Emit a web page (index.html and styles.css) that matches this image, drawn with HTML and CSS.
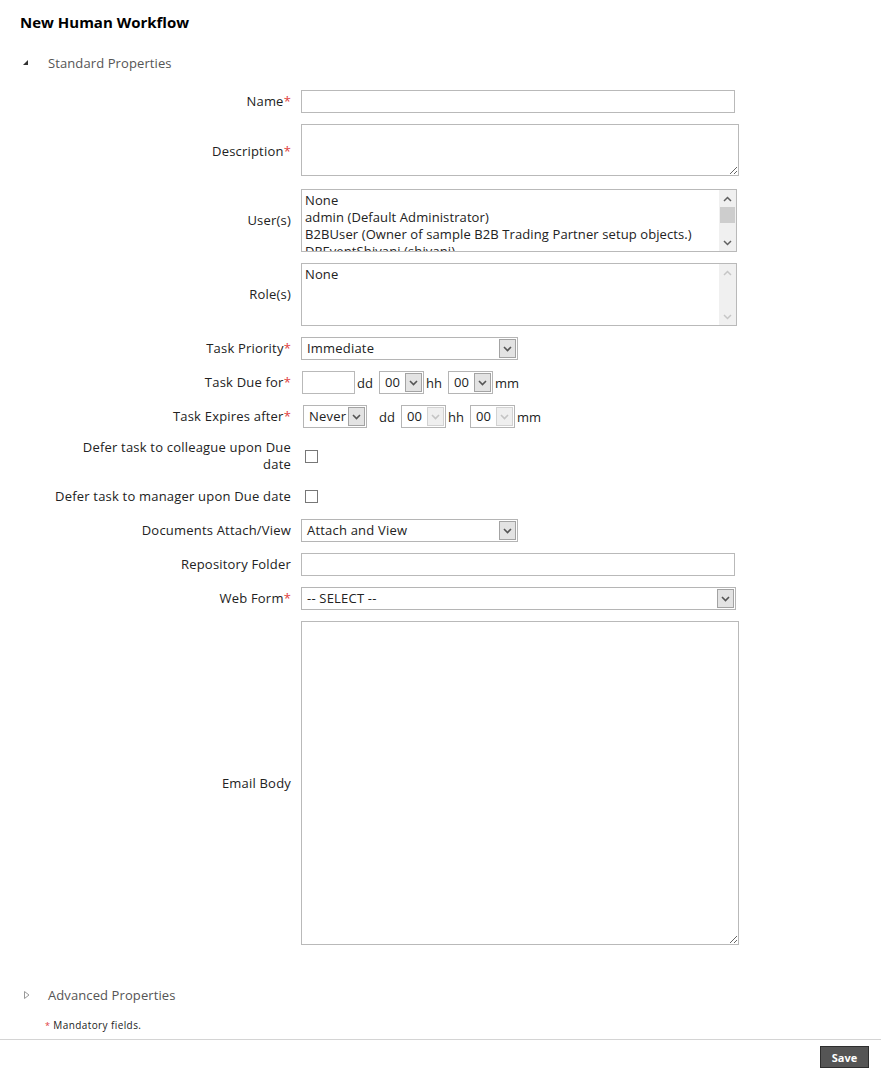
FILE: index.html
```html
<!DOCTYPE html>
<html lang="en">
<head>
    <meta charset="UTF-8">
    <title>New Human Workflow</title>
    <link rel="stylesheet" href="styles.css">
</head>
<body>
    <h1 class="title">New Human Workflow</h1>

    <div class="section-head">
        <svg class="tri" width="8" height="8" viewBox="0 0 8 8"><path d="M6 1 L6 6 L1 6 Z" fill="#333"/></svg>
        <span>Standard Properties</span>
    </div>

    <div class="form">
        <label class="lbl">Name<span class="req">*</span></label>
        <div class="field"><input type="text" class="text wide"></div>

        <label class="lbl">Description<span class="req">*</span></label>
        <div class="field"><textarea class="area desc"></textarea></div>

        <label class="lbl">User(s)</label>
        <div class="field">
            <div class="listbox">
                <div class="options">
                    <div>None</div>
                    <div>admin (Default Administrator)</div>
                    <div>B2BUser (Owner of sample B2B Trading Partner setup objects.)</div>
                    <div>DPEventShivani (shivani)</div>
                </div>
                <div class="scrollbar">
                    <span class="sb-arrow"><svg width="9" height="6" viewBox="0 0 9 6"><path d="M1 5 L4.5 1.5 L8 5" stroke="#606060" stroke-width="1.5" fill="none"/></svg></span>
                    <span class="sb-thumb"></span>
                    <span class="sb-space"></span>
                    <span class="sb-arrow"><svg width="9" height="6" viewBox="0 0 9 6"><path d="M1 1 L4.5 4.5 L8 1" stroke="#606060" stroke-width="1.5" fill="none"/></svg></span>
                </div>
            </div>
        </div>

        <label class="lbl">Role(s)</label>
        <div class="field">
            <div class="listbox">
                <div class="options">
                    <div>None</div>
                </div>
                <div class="scrollbar">
                    <span class="sb-arrow"><svg width="9" height="6" viewBox="0 0 9 6"><path d="M1 5 L4.5 1.5 L8 5" stroke="#c6c6c6" stroke-width="1.5" fill="none"/></svg></span>
                    <span class="sb-space"></span>
                    <span class="sb-arrow"><svg width="9" height="6" viewBox="0 0 9 6"><path d="M1 1 L4.5 4.5 L8 1" stroke="#c6c6c6" stroke-width="1.5" fill="none"/></svg></span>
                </div>
            </div>
        </div>

        <label class="lbl">Task Priority<span class="req">*</span></label>
        <div class="field">
            <div class="select priority"><span class="val">Immediate</span><span class="arrow"><svg width="9" height="6" viewBox="0 0 9 6"><path d="M1 1 L4.5 4.5 L8 1" stroke="#555" stroke-width="1.6" fill="none"/></svg></span></div>
        </div>

        <label class="lbl">Task Due for<span class="req">*</span></label>
        <div class="field inline">
            <input type="text" class="text days">
            <span class="unit">dd</span>
            <div class="select small"><span class="val">00</span><span class="arrow"><svg width="9" height="6" viewBox="0 0 9 6"><path d="M1 1 L4.5 4.5 L8 1" stroke="#555" stroke-width="1.6" fill="none"/></svg></span></div>
            <span class="unit">hh</span>
            <div class="select small"><span class="val">00</span><span class="arrow"><svg width="9" height="6" viewBox="0 0 9 6"><path d="M1 1 L4.5 4.5 L8 1" stroke="#555" stroke-width="1.6" fill="none"/></svg></span></div>
            <span class="unit">mm</span>
        </div>

        <label class="lbl">Task Expires after<span class="req">*</span></label>
        <div class="field inline">
            <div class="select never"><span class="val">Never</span><span class="arrow"><svg width="9" height="6" viewBox="0 0 9 6"><path d="M1 1 L4.5 4.5 L8 1" stroke="#555" stroke-width="1.6" fill="none"/></svg></span></div>
            <span class="unit dd2">dd</span>
            <div class="select small disabled"><span class="val">00</span><span class="arrow"><svg width="9" height="6" viewBox="0 0 9 6"><path d="M1 1 L4.5 4.5 L8 1" stroke="#c4c4c4" stroke-width="1.6" fill="none"/></svg></span></div>
            <span class="unit">hh</span>
            <div class="select small disabled"><span class="val">00</span><span class="arrow"><svg width="9" height="6" viewBox="0 0 9 6"><path d="M1 1 L4.5 4.5 L8 1" stroke="#c4c4c4" stroke-width="1.6" fill="none"/></svg></span></div>
            <span class="unit">mm</span>
        </div>

        <label class="lbl">Defer task to colleague upon Due date</label>
        <div class="field"><input type="checkbox" class="check"></div>

        <label class="lbl">Defer task to manager upon Due date</label>
        <div class="field check-row"><input type="checkbox" class="check"></div>

        <label class="lbl">Documents Attach/View</label>
        <div class="field">
            <div class="select priority"><span class="val">Attach and View</span><span class="arrow"><svg width="9" height="6" viewBox="0 0 9 6"><path d="M1 1 L4.5 4.5 L8 1" stroke="#555" stroke-width="1.6" fill="none"/></svg></span></div>
        </div>

        <label class="lbl">Repository Folder</label>
        <div class="field"><input type="text" class="text wide"></div>

        <label class="lbl">Web Form<span class="req">*</span></label>
        <div class="field">
            <div class="select webform"><span class="val">-- SELECT --</span><span class="arrow"><svg width="9" height="6" viewBox="0 0 9 6"><path d="M1 1 L4.5 4.5 L8 1" stroke="#555" stroke-width="1.6" fill="none"/></svg></span></div>
        </div>

        <label class="lbl">Email Body</label>
        <div class="field"><textarea class="area email"></textarea></div>
    </div>

    <div class="section-head advanced">
        <svg class="tri" width="8" height="10" viewBox="0 0 8 10"><path d="M1.5 1.5 L6 5 L1.5 8.5 Z" fill="none" stroke="#999" stroke-width="1"/></svg>
        <span>Advanced Properties</span>
    </div>

    <p class="note"><span class="req">*</span> Mandatory fields.</p>

    <div class="footer">
        <button class="save">Save</button>
    </div>
</body>
</html>
```

FILE: styles.css
```css
body {
    margin: 0;
    font-family: "Open Sans", "DejaVu Sans", sans-serif;
    font-size: 13px;
    letter-spacing: 0.2px;
    color: #222;
    background: #fff;
}

.title {
    margin: 0;
    padding: 12px 0 0 20px;
    font-size: 15px;
    font-weight: bold;
    letter-spacing: 0;
    color: #000;
    line-height: 20px;
}

.section-head {
    display: flex;
    align-items: center;
    margin: 22px 0 0 22px;
    color: #555;
    letter-spacing: 0.1px;
    line-height: 18px;
}
.section-head .tri {
    margin-right: 18px;
}
.section-head.advanced {
    margin-top: 41px;
    margin-left: 23px;
}
.section-head.advanced .tri {
    margin-right: 17px;
}

.form {
    display: grid;
    grid-template-columns: 238px 1fr;
    column-gap: 10px;
    row-gap: 11px;
    margin: 18px 0 0 53px;
    align-items: center;
}
.lbl {
    text-align: right;
    line-height: 17px;
}
.req {
    color: #e04040;
}
.field {
    display: flex;
    align-items: center;
    min-height: 23px;
}
.field.inline {
    height: 23px;
}
.field.check-row {
    min-height: 24px;
}

.text {
    box-sizing: border-box;
    height: 23px;
    border: 1px solid #b9b9b9;
    margin: 0;
    padding: 2px 4px;
    font: inherit;
}
.text.wide {
    width: 434px;
}
.text.days {
    width: 53px;
    margin-left: 1px;
}

.area {
    box-sizing: border-box;
    display: block;
    width: 438px;
    border: 1px solid #b9b9b9;
    margin: 0;
    padding: 2px 4px;
    font: inherit;
}
.area.desc {
    height: 52px;
    margin-bottom: 2px;
}
.area.email {
    height: 324px;
}

.listbox {
    box-sizing: border-box;
    display: flex;
    width: 436px;
    height: 63px;
    border: 1px solid #b9b9b9;
    overflow: hidden;
}
.options {
    flex: 1;
    padding: 2px 3px;
    line-height: 17px;
    letter-spacing: 0.1px;
    white-space: nowrap;
    overflow: hidden;
}
.scrollbar {
    display: flex;
    flex-direction: column;
    width: 17px;
    background: #f0f0f0;
}
.sb-arrow {
    display: flex;
    align-items: center;
    justify-content: center;
    height: 17px;
}
.sb-thumb {
    height: 16px;
    margin: 0 1px;
    background: #cdcdcd;
}
.sb-space {
    flex: 1;
}

.select {
    box-sizing: border-box;
    display: flex;
    height: 23px;
    border: 1px solid #b5b5b5;
    padding: 1px;
    background: #fff;
}
.select .val {
    flex: 1;
    padding-left: 4px;
    line-height: 19px;
    white-space: nowrap;
}
.select .arrow {
    box-sizing: border-box;
    display: flex;
    align-items: center;
    justify-content: center;
    width: 17px;
    border: 1px solid #a3a3a3;
    background: #e3e3e3;
}
.select.disabled .arrow {
    border-color: #d2d2d2;
    background: #efefef;
}
.select.priority {
    width: 217px;
}
.select.webform {
    width: 435px;
}
.select.small {
    width: 45px;
}
.select.never {
    width: 64px;
    margin-left: 2px;
}
.unit {
    margin: 0 6px 0 2px;
    letter-spacing: 0;
}
.unit.dd2 {
    margin-left: 12px;
}

.check {
    appearance: none;
    -webkit-appearance: none;
    box-sizing: border-box;
    width: 13px;
    height: 13px;
    margin: 0 0 0 4px;
    border: 1px solid #777;
    background: #fff;
}

.note {
    margin: 14px 0 0 45px;
    font-size: 10px;
    letter-spacing: 0.4px;
    line-height: 14px;
    color: #222;
}
.note .req {
    font-size: 9px;
}

.footer {
    display: flex;
    justify-content: flex-end;
    margin-top: 6px;
    padding: 6px 12px 0 0;
    border-top: 1px solid #d4d4d4;
}
.save {
    width: 49px;
    height: 22px;
    padding: 0;
    background: #555;
    border: 1px solid #2e2e2e;
    color: #fff;
    font-family: "Open Sans", "DejaVu Sans", sans-serif;
    font-size: 11px;
    font-weight: bold;
}
```
